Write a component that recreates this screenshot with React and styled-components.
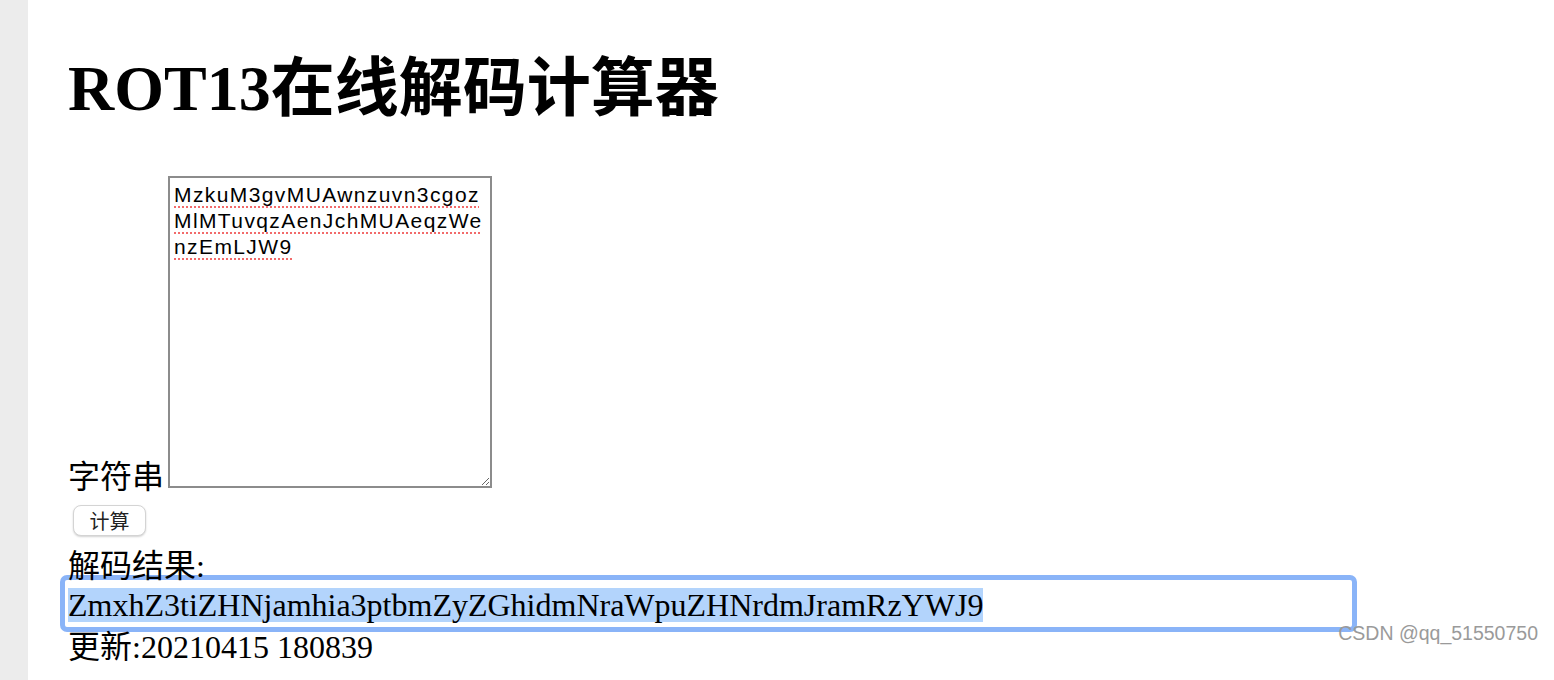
// App.jsx - ROT13 online decoder page
import styled, { createGlobalStyle } from "styled-components";

const INPUT = "MzkuM3gvMUAwnzuvn3cgozMlMTuvqzAenJchMUAeqzWenzEmLJW9";
const RESULT = "ZmxhZ3tiZHNjamhia3ptbmZyZGhidmNraWpuZHNrdmJramRzYWJ9";

const GlobalStyle = createGlobalStyle`
  html, body {
    margin: 0;
    padding: 0;
    background: #ffffff;
  }
  body {
    font-family: "Liberation Serif", "Noto Sans CJK SC", serif;
    color: #000;
  }
`;

export default function App() {
  return (
    <>
      <GlobalStyle />
      <Page>
        <SideStrip />
        <Main>
          <Title>ROT13在线解码计算器</Title>

          {/* input row: label sits on the textarea baseline */}
          <InputRow>
            <Label>字符串</Label>
            <TextArea defaultValue={INPUT} spellCheck={false} />
          </InputRow>

          <CalcButton type="button">计算</CalcButton>

          <TextLine $top={11}>解码结果:</TextLine>
          <ResultBox>
            <Selected>{RESULT}</Selected>
          </ResultBox>
          <TextLine $top={-4}>更新:20210415 180839</TextLine>

          <Watermark>CSDN @qq_51550750</Watermark>
        </Main>
      </Page>
    </>
  );
}

const Page = styled.div`
  display: flex;
  min-height: 680px;
  width: 100%;
`;

const SideStrip = styled.div`
  width: 28px;
  flex-shrink: 0;
  background: #ececec;
`;

const Main = styled.div`
  position: relative;
  flex: 1;
  padding: 0 40px;
  display: flex;
  flex-direction: column;
  align-items: flex-start;
`;

const Title = styled.h1`
  margin: 48px 0 0;
  font-size: 64px;
  line-height: 82px;
  font-weight: 700;
`;

const InputRow = styled.div`
  margin-top: 46px;
  font-size: 32px;
  line-height: 36px;
`;

const Label = styled.span`
  margin-right: 4px;
`;

const TextArea = styled.textarea`
  box-sizing: border-box;
  width: 324px;
  height: 312px;
  margin: 0;
  padding: 4px;
  vertical-align: baseline;
  border: 2px solid #8c8c8c;
  border-radius: 0;
  background: #fff;
  font-family: "Liberation Sans", Arial, sans-serif;
  font-size: 21px;
  line-height: 26px;
  letter-spacing: 1.4px;
  color: #000;
  text-decoration: underline dotted #f26a6a;
  text-decoration-thickness: 2px;
  text-underline-offset: 4px;
  outline: none;
`;

const CalcButton = styled.button`
  margin: 10px 0 0 5px;
  width: 73px;
  height: 31px;
  padding: 0;
  border: 1px solid #d4d4d4;
  border-radius: 8px;
  background: #fff;
  box-shadow: 0 1px 2px rgba(0, 0, 0, 0.18);
  font-family: "Noto Sans CJK SC", sans-serif;
  font-size: 20px;
  color: #222;
`;

const TextLine = styled.div`
  position: relative;
  z-index: 1;
  font-size: 32px;
  line-height: 38px;
  margin-top: ${({ $top }) => $top || 0}px;
`;

const ResultBox = styled.div`
  box-sizing: border-box;
  width: 1297px;
  margin-left: -8px;
  margin-top: -10px;
  padding: 8px 3px 5px;
  border: 5px solid #8ab4f8;
  border-radius: 7px;
  font-size: 32px;
  line-height: 34px;
`;

const Selected = styled.span`
  display: inline-block;
  line-height: 34px;
  background: #b3d4fc;
`;

const Watermark = styled.div`
  position: absolute;
  right: 16px;
  top: 622px;
  font-family: "Liberation Sans", Arial, sans-serif;
  font-size: 19.5px;
  color: #9a9a9a;
`;
